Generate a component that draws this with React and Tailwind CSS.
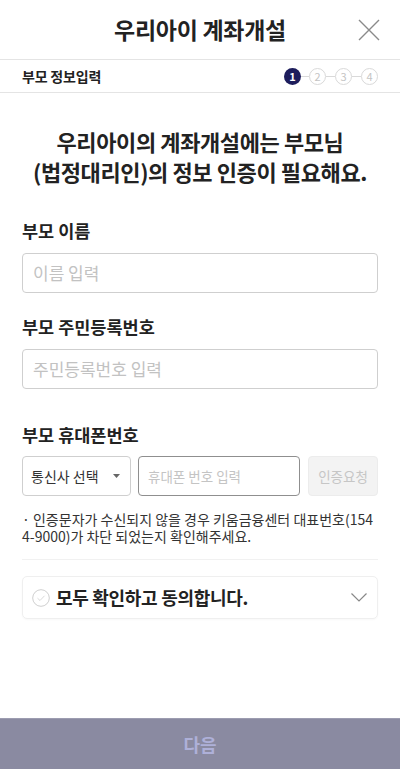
import React from "react";

const font = { fontFamily: '"Noto Sans CJK KR", "Noto Sans", sans-serif' };

function Step({ n, active }) {
  return active ? (
    <div className="w-[17px] h-[17px] rounded-full bg-[#1d1d5c] text-white text-[11px] font-bold flex items-center justify-center leading-none">
      {n}
    </div>
  ) : (
    <div className="w-[17px] h-[17px] rounded-full border border-[#d9d9d9] text-[#c4c4c4] text-[11px] flex items-center justify-center leading-none">
      {n}
    </div>
  );
}

export default function App() {
  return (
    <div className="w-[400px] h-[769px] bg-white flex flex-col text-[#222]" style={font}>
      <div className="flex-1 flex flex-col">
        {/* Header */}
        <div className="h-[60px] grid grid-cols-[60px_1fr_60px] items-center border-b border-[#e4e4e4]">
          <div />
          <div className="text-center text-[23px] font-bold tracking-[-0.3px] text-[#222]">우리아이 계좌개설</div>
          <div className="flex justify-end pr-[20px]">
            <svg width="22" height="22" viewBox="0 0 22 22">
              <path d="M1 1 L21 21 M21 1 L1 21" stroke="#8a8a8a" strokeWidth="1.4" fill="none" />
            </svg>
          </div>
        </div>

        {/* Sub header */}
        <div className="h-[33px] flex items-center justify-between px-[22px] border-b border-[#e4e4e4]">
          <div className="text-[14px] font-bold text-[#222] tracking-[-0.2px]">부모 정보입력</div>
          <div className="flex items-center">
            <Step n="1" active />
            <div className="w-2 h-px bg-[#d9d9d9]" />
            <Step n="2" />
            <div className="w-[9px] h-px bg-[#d9d9d9]" />
            <Step n="3" />
            <div className="w-[9px] h-px bg-[#d9d9d9]" />
            <Step n="4" />
          </div>
        </div>

        {/* Headline */}
        <div className="mt-[33px] text-center text-[22px] leading-[30px] font-bold tracking-[-0.4px] text-[#222]">
          <div>우리아이의 계좌개설에는 부모님</div>
          <div>(법정대리인)의 정보 인증이 필요해요.</div>
        </div>

        <div className="px-[22px] flex flex-col">
          <div className="mt-[33px] text-[17.5px] leading-[24px] font-bold text-[#222]">부모 이름</div>
          <div className="mt-[10px] h-[40px] rounded-[4px] border border-[#cfcfcf] flex items-center px-[10px] text-[17px] text-[#c2c2c2]">
            이름 입력
          </div>

          <div className="mt-[22px] text-[17.5px] leading-[24px] font-bold text-[#222]">부모 주민등록번호</div>
          <div className="mt-[10px] h-[40px] rounded-[4px] border border-[#cfcfcf] flex items-center px-[10px] text-[17px] text-[#c2c2c2]">
            주민등록번호 입력
          </div>

          <div className="mt-[34px] text-[17.5px] leading-[24px] font-bold text-[#222]">부모 휴대폰번호</div>
          <div className="mt-[9px] h-[40px] flex gap-[7px]">
            <div className="w-[109px] rounded-[4px] border border-[#cfcfcf] flex items-center justify-between pl-[8px] pr-[10px] text-[14px] text-[#333]">
              <span>통신사 선택</span>
              <svg width="7" height="4" viewBox="0 0 7 4">
                <path d="M0 0 H7 L3.5 4 Z" fill="#666" />
              </svg>
            </div>
            <div className="w-[162px] rounded-[4px] border border-[#8f8f8f] flex items-center px-[9px] text-[13.5px] text-[#c4c4c4]">
              휴대폰 번호 입력
            </div>
            <div className="flex-1 ml-px rounded-[4px] bg-[#f3f3f3] border border-[#ececec] flex items-center justify-center text-[13.5px] text-[#c6c6c6]">
              인증요청
            </div>
          </div>

          <div className="mt-[15px] text-[14px] leading-[17px] text-[#333] break-all">
            · 인증문자가 수신되지 않을 경우 키움금융센터 대표번호(1544-9000)가 차단 되었는지 확인해주세요.
          </div>

          <div className="mt-[14px] h-px bg-[#f1f1f1]" />

          <div className="mt-[16px] h-[43px] rounded-[5px] border border-[#efefef] shadow-[0_1px_2px_rgba(0,0,0,0.03)] flex items-center justify-between pl-[9px] pr-[10px]">
            <div className="flex items-center gap-[6px]">
              <svg width="18" height="18" viewBox="0 0 18 18">
                <circle cx="9" cy="9" r="8.3" fill="white" stroke="#cfcfcf" strokeWidth="1" />
                <path d="M5.5 9.2 L8 11.5 L12.5 6.8" stroke="#dadada" strokeWidth="1" fill="none" />
              </svg>
              <span className="text-[18px] font-bold text-[#222] tracking-[-0.3px]">모두 확인하고 동의합니다.</span>
            </div>
            <svg width="16" height="9" viewBox="0 0 16 9">
              <path d="M0.5 0.5 L8 8 L15.5 0.5" stroke="#888" strokeWidth="1.2" fill="none" />
            </svg>
          </div>
        </div>
      </div>

      {/* Bottom button */}
      <div className="h-[51px] bg-[#8a8aa1] border-t border-[#9c9cb0] flex items-center justify-center text-[18px] font-bold text-[#aeb0d8]">
        다음
      </div>
    </div>
  );
}
